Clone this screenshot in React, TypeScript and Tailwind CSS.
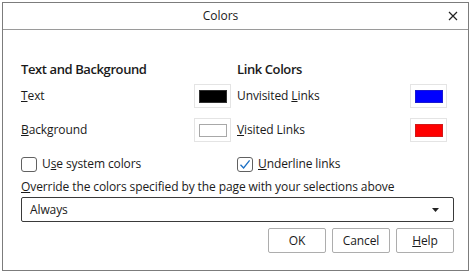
import React from 'react';

const font = { fontFamily: '"Open Sans", "Noto Sans", Arial, sans-serif' };

function Swatch({ color, border }: { color: string; border: string }) {
  return (
    <div className="w-[37px] h-[24px] border border-[#e4e4e4] bg-white flex items-center justify-center">
      <div className={`w-[28px] h-[13px] border ${border}`} style={{ backgroundColor: color }} />
    </div>
  );
}

function Check({ checked }: { checked?: boolean }) {
  return (
    <div className="w-[16px] h-[15px] rounded-[3px] border border-[#616161] bg-white flex items-center justify-center">
      {checked && (
        <svg width="12" height="11" viewBox="0 0 12 11" fill="none">
          <path d="M1.5 5.8 L4.6 9 L10.6 1.4" stroke="#1a6fc4" strokeWidth="1.3" />
        </svg>
      )}
    </div>
  );
}

function Btn({ children }: { children: React.ReactNode }) {
  return (
    <div className="w-[58px] h-[25px] border border-[#adadad] rounded-[2px] bg-white flex items-center justify-center text-[12px] text-[#1a1a1a]">
      {children}
    </div>
  );
}

export default function App() {
  return (
    <div className="w-[474px] h-[272px] bg-white pl-[2px] pt-[2px]" style={font}>
      <div className="w-[467px] h-[269px] border border-[#7c7c7c] bg-white flex flex-col">
        {/* title bar */}
        <div className="h-[27px] flex items-center border-b border-[#9a9a9a]">
          <div className="flex-1 text-center text-[12px] text-[#1a1a1a]">Colors</div>
          <div className="w-[30px] flex items-center justify-center">
            <svg width="10" height="10" viewBox="0 0 10 10">
              <path d="M1 1 L9 9 M9 1 L1 9" stroke="#222" strokeWidth="1.2" />
            </svg>
          </div>
        </div>

        <div className="flex flex-col pl-[18px] pr-[14px] text-[12px] tracking-[-0.1px] text-[#1a1a1a]">
          <div className="grid grid-cols-[216px_1fr] mt-[31px]">
            {/* left column */}
            <div className="flex flex-col pr-[6px]">
              <div className="h-[18px] flex items-center text-[13px] font-semibold tracking-[-0.4px]">Text and Background</div>
              <div className="mt-[5px] h-[24px] flex items-center justify-between">
                <span><u>T</u>ext</span>
                <Swatch color="#000000" border="border-[#303030]" />
              </div>
              <div className="mt-[10px] h-[24px] flex items-center justify-between">
                <span><u>B</u>ackground</span>
                <Swatch color="#ffffff" border="border-[#a8a8a8]" />
              </div>
              <div className="mt-[14px] h-[16px] flex items-center gap-[5px]">
                <Check />
                <span>U<u>s</u>e system colors</span>
              </div>
            </div>

            {/* right column */}
            <div className="flex flex-col pr-[7px]">
              <div className="h-[18px] flex items-center text-[13px] font-semibold tracking-[-0.4px]">Link Colors</div>
              <div className="mt-[5px] h-[24px] flex items-center justify-between">
                <span>Unvisited <u>L</u>inks</span>
                <Swatch color="#0000ff" border="border-[#1a1ad0]" />
              </div>
              <div className="mt-[10px] h-[24px] flex items-center justify-between">
                <span><u>V</u>isited Links</span>
                <Swatch color="#ff0000" border="border-[#d01a1a]" />
              </div>
              <div className="mt-[14px] h-[16px] flex items-center gap-[5px]">
                <Check checked />
                <span><u>U</u>nderline links</span>
              </div>
            </div>
          </div>

          <div className="mt-[7px] h-[16px] flex items-center">
            <span><u>O</u>verride the colors specified by the page with your selections above</span>
          </div>

          <div className="mt-[2px] h-[25px] border border-[#3a3a3a] rounded-[2px] flex items-center justify-between pl-[8px] pr-[14px]">
            <span>Always</span>
            <svg width="7" height="4" viewBox="0 0 7 4">
              <path d="M0 0 H7 L3.5 4 Z" fill="#222" />
            </svg>
          </div>

          <div className="mt-[6px] flex justify-end gap-[6px]">
            <Btn>OK</Btn>
            <Btn>Cancel</Btn>
            <Btn><span><u>H</u>elp</span></Btn>
          </div>
        </div>
      </div>
    </div>
  );
}
